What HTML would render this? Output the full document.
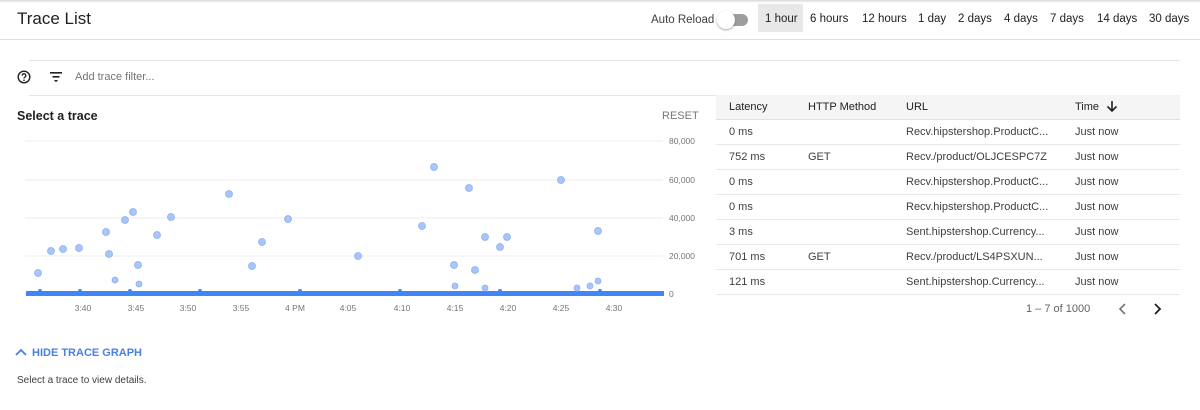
<!DOCTYPE html>
<html><head><style>
*{margin:0;padding:0;box-sizing:border-box}
body{width:1200px;height:410px;background:#fff;font-family:"Liberation Sans",sans-serif;color:#202124;position:relative;overflow:hidden}
.a{position:absolute;white-space:nowrap}
.t{font-size:11px;color:#3c4043}
</style></head><body>
<div class="a" style="left:0;top:0;width:1200px;height:3px;background:linear-gradient(#d8d8d8,#fff)"></div>
<div class="a" style="left:17px;top:9px;font-size:17px;color:#202124">Trace List</div>
<div class="a" style="left:0;top:39px;width:1200px;height:1px;background:#e0e0e0"></div>
<div class="a t" style="left:651px;top:14px;font-size:11.5px">Auto Reload</div>
<div class="a" style="left:726px;top:14px;width:22px;height:12px;border-radius:6px;background:#9e9e9e"></div>
<div class="a" style="left:717px;top:11px;width:18px;height:18px;border-radius:50%;background:#fff;box-shadow:0 1px 2px rgba(0,0,0,.35)"></div>
<div class="a" style="left:758px;top:4px;width:45px;height:28px;background:#e8e8e8"></div>
<div class="a" style="left:765px;top:13px;font-size:11.5px;color:#202124">1 hour</div>
<div class="a" style="left:810px;top:13px;font-size:11.5px">6 hours</div>
<div class="a" style="left:862px;top:13px;font-size:11.5px">12 hours</div>
<div class="a" style="left:918px;top:13px;font-size:11.5px">1 day</div>
<div class="a" style="left:958px;top:13px;font-size:11.5px">2 days</div>
<div class="a" style="left:1004px;top:13px;font-size:11.5px">4 days</div>
<div class="a" style="left:1050px;top:13px;font-size:11.5px">7 days</div>
<div class="a" style="left:1097px;top:13px;font-size:11.5px">14 days</div>
<div class="a" style="left:1149px;top:13px;font-size:11.5px">30 days</div>

<div class="a" style="left:29px;top:60px;width:1151px;height:1px;background:#e6e6e6"></div>
<div class="a" style="left:29px;top:95px;width:687px;height:1px;background:#e6e6e6"></div>
<svg class="a" style="left:17px;top:70px" width="14" height="14" viewBox="0 0 14 14"><circle cx="7" cy="7" r="5.8" fill="none" stroke="#202124" stroke-width="1.4"/><path d="M5.2 5.6a1.8 1.8 0 1 1 2.6 1.6c-.6.3-.8.6-.8 1.3" fill="none" stroke="#202124" stroke-width="1.3"/><circle cx="7" cy="10.2" r=".8" fill="#202124"/></svg>
<svg class="a" style="left:50px;top:72px" width="12" height="10"><rect x="0" y="0" width="12" height="1.6" fill="#202124"/><rect x="2.5" y="4" width="7" height="1.6" fill="#202124"/><rect x="4.5" y="8" width="3" height="1.6" fill="#202124"/></svg>
<div class="a" style="left:75px;top:71px;font-size:11px;color:#757575">Add trace filter...</div>

<div class="a" style="left:17px;top:109px;font-size:12.5px;font-weight:bold">Select a trace</div>
<div class="a" style="left:662px;top:110px;font-size:11px;color:#757575">RESET</div>

<svg class="a" style="left:0;top:130px" width="716" height="190">
<g stroke="#eeeeee" stroke-width="1">
<line x1="25" y1="11" x2="663" y2="11"/><line x1="25" y1="50" x2="663" y2="50"/><line x1="25" y1="88" x2="663" y2="88"/><line x1="25" y1="126" x2="663" y2="126"/><line x1="25" y1="164" x2="663" y2="164"/>
</g>
<g font-family="Liberation Sans" font-size="8.5" fill="#757575">
<text x="669" y="14">80,000</text><text x="669" y="53">60,000</text><text x="669" y="91">40,000</text><text x="669" y="129">20,000</text><text x="669" y="167">0</text>
<g text-anchor="middle"><text x="83" y="181">3:40</text><text x="136" y="181">3:45</text><text x="188" y="181">3:50</text><text x="241" y="181">3:55</text><text x="295" y="181">4 PM</text><text x="348" y="181">4:05</text><text x="402" y="181">4:10</text><text x="455" y="181">4:15</text><text x="508" y="181">4:20</text><text x="561" y="181">4:25</text><text x="614" y="181">4:30</text></g>
</g>
<rect x="26" y="161" width="638" height="5" fill="#4285f4"/>
<g fill="#4285f4"><circle cx="40" cy="161" r="2"/><circle cx="80" cy="161" r="2"/><circle cx="130" cy="161" r="2"/><circle cx="200" cy="161" r="2"/><circle cx="300" cy="161" r="2"/><circle cx="400" cy="161" r="2"/><circle cx="500" cy="161" r="2"/><circle cx="600" cy="161" r="2"/></g>
<g fill="#a8c5f8" stroke="#8ab0f2" stroke-width="0.8">
<circle cx="38" cy="143" r="3.5"/><circle cx="51" cy="121" r="3.5"/><circle cx="63" cy="119" r="3.5"/><circle cx="79" cy="118" r="3.5"/><circle cx="106" cy="102" r="3.5"/><circle cx="109" cy="124" r="3.5"/><circle cx="125" cy="90" r="3.5"/><circle cx="133" cy="82" r="3.5"/><circle cx="138" cy="135" r="3.5"/><circle cx="157" cy="105" r="3.5"/><circle cx="171" cy="87" r="3.5"/><circle cx="229" cy="64" r="3.5"/><circle cx="252" cy="136" r="3.5"/><circle cx="262" cy="112" r="3.5"/><circle cx="288" cy="89" r="3.5"/><circle cx="358" cy="126" r="3.5"/><circle cx="422" cy="96" r="3.5"/><circle cx="434" cy="37" r="3.5"/><circle cx="454" cy="135" r="3.5"/><circle cx="469" cy="58" r="3.5"/><circle cx="475" cy="140" r="3.5"/><circle cx="485" cy="107" r="3.5"/><circle cx="500" cy="117" r="3.5"/><circle cx="507" cy="107" r="3.5"/><circle cx="561" cy="50" r="3.5"/><circle cx="598" cy="101" r="3.5"/>
<circle cx="115" cy="150" r="3"/><circle cx="139" cy="154" r="3"/><circle cx="455" cy="156" r="3"/><circle cx="485" cy="158" r="3"/><circle cx="577" cy="158" r="3"/><circle cx="590" cy="156" r="3"/><circle cx="598" cy="151" r="3"/>
</g>
</svg>

<div class="a" style="left:716px;top:95px;width:464px;height:25px;background:#f5f5f5;border-bottom:1px solid #e0e0e0"></div>
<div class="a" style="left:729px;top:101px;font-size:11px">Latency</div>
<div class="a" style="left:808px;top:101px;font-size:11px">HTTP Method</div>
<div class="a" style="left:906px;top:101px;font-size:11px">URL</div>
<div class="a" style="left:1075px;top:101px;font-size:11px">Time</div>
<svg class="a" style="left:1106px;top:100px" width="12" height="13"><path d="M6 1v10M1.5 6.5L6 11l4.5-4.5" fill="none" stroke="#202124" stroke-width="1.6"/></svg>

<div style="position:absolute;left:716px;top:120px;width:464px">
<style>.r{height:25px;border-bottom:1px solid #e8e8e8;position:relative;font-size:11px;color:#3c4043}.r span{position:absolute;top:6px}</style>
<div class="r"><span style="left:13px">0 ms</span><span style="left:190px">Recv.hipstershop.ProductC...</span><span style="left:359px">Just now</span></div>
<div class="r"><span style="left:13px">752 ms</span><span style="left:92px">GET</span><span style="left:190px">Recv./product/OLJCESPC7Z</span><span style="left:359px">Just now</span></div>
<div class="r"><span style="left:13px">0 ms</span><span style="left:190px">Recv.hipstershop.ProductC...</span><span style="left:359px">Just now</span></div>
<div class="r"><span style="left:13px">0 ms</span><span style="left:190px">Recv.hipstershop.ProductC...</span><span style="left:359px">Just now</span></div>
<div class="r"><span style="left:13px">3 ms</span><span style="left:190px">Sent.hipstershop.Currency...</span><span style="left:359px">Just now</span></div>
<div class="r"><span style="left:13px">701 ms</span><span style="left:92px">GET</span><span style="left:190px">Recv./product/LS4PSXUN...</span><span style="left:359px">Just now</span></div>
<div class="r"><span style="left:13px">121 ms</span><span style="left:190px">Sent.hipstershop.Currency...</span><span style="left:359px">Just now</span></div>
</div>
<div class="a" style="left:1026px;top:303px;font-size:11px;color:#5f6368">1 – 7 of 1000</div>
<svg class="a" style="left:1117px;top:302px" width="12" height="14"><path d="M8 2L3 7l5 5" fill="none" stroke="#757575" stroke-width="1.6"/></svg>
<svg class="a" style="left:1151px;top:302px" width="12" height="14"><path d="M4 2l5 5-5 5" fill="none" stroke="#202124" stroke-width="1.8"/></svg>

<svg class="a" style="left:15px;top:348px" width="12" height="8"><path d="M1 7l5-5 5 5" fill="none" stroke="#4a7fe6" stroke-width="1.8"/></svg>
<div class="a" style="left:32px;top:347px;font-size:11px;font-weight:bold;color:#4a7fe6">HIDE TRACE GRAPH</div>
<div class="a" style="left:17px;top:375px;font-size:10px;color:#3c4043">Select a trace to view details.</div>
</body></html>
